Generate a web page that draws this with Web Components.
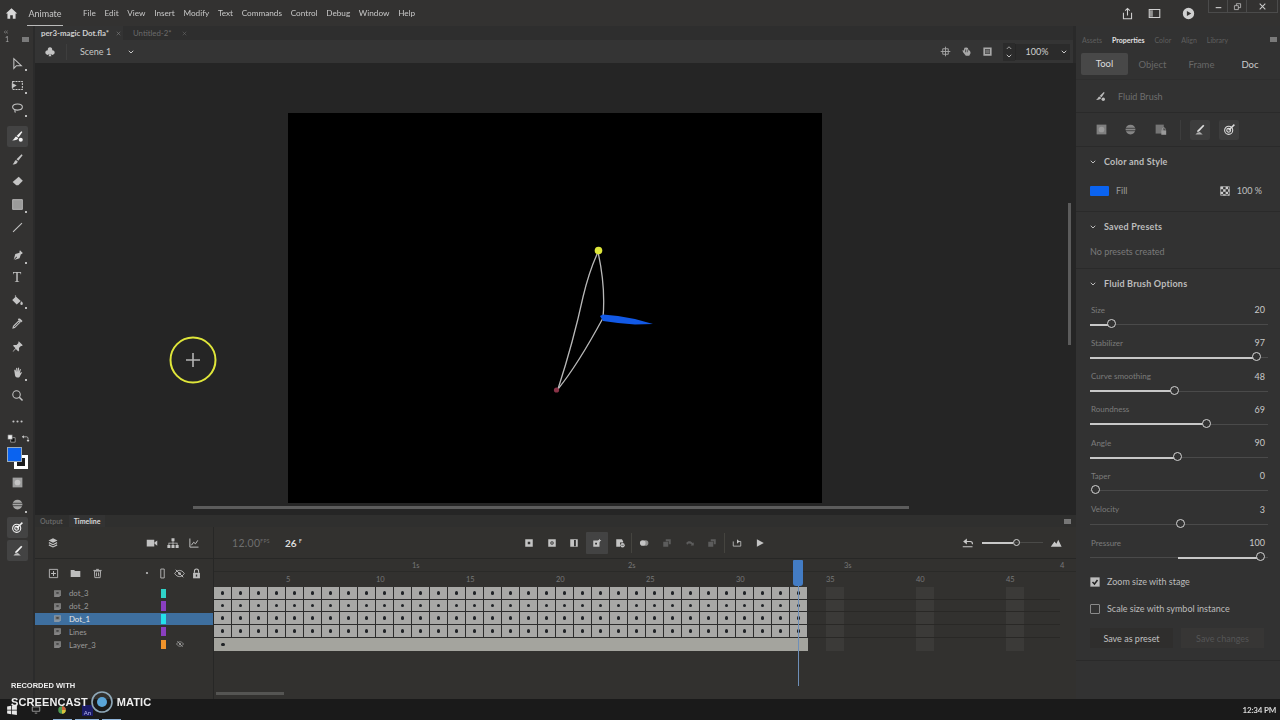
<!DOCTYPE html>
<html lang="en">
<head>
<meta charset="utf-8">
<title>Animate</title>
<style>
html, body { margin: 0; height: 100%; background: #252525; overflow: hidden; }
body { font-family: Lato, "Open Sans", "Liberation Sans", sans-serif; }
</style>
</head>
<body>
<an-app></an-app>
<script>
/* icon strokes and fills, all on a 16 x 16 box */
const S = 'fill="none" stroke="currentColor" stroke-width="1.3"'
const ICONS = {
  home: `<path fill="currentColor" d="M8 1.500 15 8h-2v6.500H9.600V10H6.400v4.500H3V8H1z"/>`,
  share: `<path ${S} d="M3 7v7.500h10V7M8 10.500V2M5.200 4.600 8 1.800l2.800 2.800"/>`,
  panel: `<path ${S} d="M1.500 3h13v10h-13z"/><path fill="currentColor" opacity=".6" d="M2 4h4v8H2z"/>`,
  playc: `<path fill="currentColor" fill-rule="evenodd" d="M8 1a7 7 0 1 1 0 14A7 7 0 0 1 8 1zM6 4.800v6.400L11.400 8z"/>`,
  min: `<path fill="currentColor" d="M3 9h10v2H3z"/>`,
  restore: `<path ${S} d="M2.500 6.500h7v7h-7zM6 6.500V3h7.500v7H9.500"/>`,
  close: `<path fill="none" stroke="currentColor" stroke-width="1.800" d="m3 3 10 10M13 3 3 13"/>`,
  x: `<path fill="none" stroke="currentColor" stroke-width="1.200" d="m4 4 8 8M12 4l-8 8"/>`,
  club: `<path fill="currentColor" d="M8 1.500a3 3 0 0 1 2.700 4.300 3 3 0 1 1-1.900 4.600c.1 1.300.5 2.300 1.200 3.100H6c.7-.8 1.100-1.800 1.200-3.100a3 3 0 1 1-1.900-4.600A3 3 0 0 1 8 1.500z"/>`,
  chev: `<path fill="none" stroke="currentColor" stroke-width="2" d="m3.500 5.500 4.500 4.500 4.500-4.500"/>`,
  chevup: `<path fill="none" stroke="currentColor" stroke-width="1.600" d="m3.500 10 4.500-4.500 4.500 4.500"/>`,
  center: `<path ${S} d="M4 4h8v8H4zM8 1v14M1 8h14"/>`,
  clip: `<path fill="currentColor" d="M5 2.500 8 2l2 1 1 3 2 1 1 3-2 4H7L3 9 2 6l2 .5z"/><path fill="#333" d="M6 5h1v4H6zM8.500 5h1v4h-1z"/>`,
  frame: `<path fill="currentColor" fill-rule="evenodd" d="M2 2h12v12H2zM4.500 4.500v7h7v-7z"/><path fill="currentColor" opacity=".5" d="M5 5h6v6H5z"/>`,
  arrow: `<path ${S} d="M3.500 2v12l3.200-3.300h6z"/>`,
  transform: `<path ${S} stroke-dasharray="2.500 1" d="M2 3h12v10H2z"/><path fill="currentColor" d="M1 4.500 7 8l-6 3.500z"/>`,
  lasso: `<path ${S} d="M8 2.500c3.500 0 6 1.800 6 3.800s-2.500 3.700-6 3.700-6-1.700-6-3.700 2.500-3.800 6-3.800zM5 9.500c-1 1.500 0 2.500.5 3.500"/>`,
  fluid: `<path fill="currentColor" d="M12.800 1.500 14 2.600 9.500 9 6.800 7.300zM6 8l3 1.800c-.5 2-2.500 3-7.500 3.200C4 11.500 4.200 9.500 6 8z"/><circle cx="12" cy="12" r="2.500" fill="currentColor"/>`,
  brush: `<path fill="currentColor" d="M13 1.500l1.300 1.200L9 9.500 6.800 7.700zM6 8.500l2.300 1.900C7.800 13 5 14.300 2 14c1.500-1 2-4 4-5.500z"/>`,
  eraser: `<path fill="currentColor" d="M9.500 2 14.500 7 9 12.500H6.500L2 8.500z"/>`,
  rect: `<path fill="currentColor" opacity=".72" d="M2 2h12v12H2z"/><path fill="none" stroke="currentColor" d="M2 2h12v12H2z"/>`,
  line: `<path ${S} d="m2.500 13.500 11-11"/>`,
  pen: `<path fill="currentColor" d="M11 1.500 14.500 5l-1.500 1.500-.7-.3-1.800 5.300-6.500 2 3.500-3.500-.7-.7-3.500 3.500 2-6.500 5.300-1.800-.3-.7z"/>`,
  bucket: `<path fill="currentColor" d="M6 3l6 5.500-5 4.500-5.500-5.500zM5.500 1.500l1 1-1 1-1-1z"/><path fill="currentColor" d="M13 9c1 1.300 1.500 2 1.500 3a1.500 1.500 0 0 1-3 0c0-1 .5-1.700 1.500-3z"/>`,
  dropper: `<path ${S} d="m9.500 5 1.500 1.500-6.500 6.500-2 .5.500-2z"/><path fill="currentColor" d="m11 1.800 3.200 3.200-1.500 1.500-.8-.2-3.200-3.200-.2-.8z"/>`,
  pin: `<path fill="currentColor" d="M9.500 1.500 14.500 6.500l-1.300 1-1-.2L9.800 9.700 10 13l-1 1-3-3-3.500 3.500L2 14l3.500-4-3-3 1-1 3.300.2 2.400-2.400-.2-1z"/>`,
  hand: `<path fill="currentColor" d="M4.600 4.500c.7-.3 1 .2 1.200.8L6.500 7.500 6.300 2.800c0-1 1.300-1 1.400 0L8 7l.6-4.600c.2-1 1.500-.8 1.400.2L9.600 7.200l1.300-3.200c.4-.8 1.500-.4 1.200.5L10.800 9c1-1 1.800-1.800 2.500-1.200.5.400 0 1-.5 1.500L10.500 13.500c-.5.500-1 .7-2 .7-2 0-3-.7-3.500-2.500L4 5.500c0-.5.200-.8.600-1z"/>`,
  zoom: `<circle cx="6.800" cy="6.800" r="4.600" ${S}/><path fill="none" stroke="currentColor" stroke-width="1.800" d="m10.200 10.200 4 4"/>`,
  dots: `<circle cx="3" cy="8" r="1.300" fill="currentColor"/><circle cx="8" cy="8" r="1.300" fill="currentColor"/><circle cx="13" cy="8" r="1.300" fill="currentColor"/>`,
  swap: `<path ${S} d="M3.500 5H10c1.500 0 2.500 1 2.500 2.500V13"/><path fill="currentColor" d="M5 2v6L1.500 5zM10 10.500h5L12.500 14z"/>`,
  defaults: `<path fill="#111" stroke="#ddd" d="M6.500 6.500h8v8h-8z"/><path fill="#eee" stroke="#555" d="M1.500 1.500h8v8h-8z"/>`,
  objdraw: `<path fill="currentColor" opacity=".75" d="M2 2h12v12H2z"/><circle cx="8" cy="8" r="3.500" fill="currentColor"/>`,
  globe: `<circle cx="8" cy="8" r="6" fill="currentColor" opacity=".8"/><path fill="none" stroke="#333" d="M2 6.500h12M2 9.500h12"/>`,
  lockfill: `<path fill="currentColor" opacity=".65" d="M2 2h10v11H2z"/><path fill="currentColor" d="M9 9h6v5.500H9z"/><path fill="none" stroke="currentColor" d="M10.300 9V7.500a1.700 1.700 0 0 1 3.400 0V9"/>`,
  pencil: `<path fill="currentColor" d="M12.500 2 14 3.500 7.500 10.500 5 11.500l.8-2.700z"/><path fill="currentColor" opacity=".7" d="M3 14c2-2 4-3 5.500-3L12 14z"/>`,
  target: `<circle cx="7" cy="9" r="5" ${S}/><circle cx="7" cy="9" r="2.400" ${S}/><path fill="none" stroke="currentColor" stroke-width="1.800" d="M7 9 14 2"/>`,
  checker: `<path fill="currentColor" d="M1 1h4v4H1zM9 1h4v4H9zM5 5h4v4H5zM13 5h2v4h-2zM1 9h4v4H1zM9 9h4v4H9zM5 13h4v2H5zM13 13h2v2h-2z"/><path fill="none" stroke="currentColor" d="M1 1h14v14H1z"/>`,
  layers: `<path fill="currentColor" d="m8 1.500 6 3-6 3-6-3z"/><path fill="none" stroke="currentColor" stroke-width="1.500" d="m2.500 7.500 5.500 2.800 5.500-2.800M2.500 10.500 8 13.300l5.500-2.800"/>`,
  camera: `<path fill="currentColor" d="M1 3.500h10v9H1zM11.500 7l3.500-2.500v7L11.500 9z"/>`,
  tree: `<path fill="currentColor" d="M6 1.500h4v4H8.500V7.500H14v3h1.500v4h-4v-4H13V8.500H8.500v2H10v4H6v-4h1.500v-2H3v2h1.500v4h-4v-4H2v-3h5.500V5.500H6z"/>`,
  graph: `<path ${S} d="M2.500 2v11.500H14"/><path ${S} d="m4.500 11 3-4 2.500 2 3-4.500"/>`,
  addlayer: `<path ${S} d="M2 2h12v12H2z"/><path fill="currentColor" d="M7.300 4.500h1.400v2.800h2.800v1.400H8.700v2.800H7.300V8.700H4.500V7.300h2.800z"/>`,
  folder: `<path fill="currentColor" d="M1 3h5l1.500 1.500H15V13H1z"/>`,
  trash: `<path ${S} d="M3.500 4.500h9l-.6 9.500H4.100zM2 3.500h12M6 2h4M6.500 6.500v5.500M9.500 6.500v5.500"/>`,
  dot: `<circle cx="8" cy="8" r="2.200" fill="currentColor"/>`,
  outline: `<path ${S} d="M5.500 1.500h5v13h-5z"/>`,
  eyeoff: `<path ${S} d="M1 8c2-3 4.300-4.500 7-4.500S13 5 15 8c-2 3-4.300 4.500-7 4.500S3 11 1 8z"/><circle cx="8" cy="8" r="2" fill="currentColor"/><path fill="none" stroke="currentColor" stroke-width="1.400" d="m2.500 2.500 11 11"/>`,
  lock: `<path fill="currentColor" d="M3 7h10v8H3z"/><path fill="none" stroke="currentColor" stroke-width="1.600" d="M5 7V4.500a3 3 0 0 1 6 0V7"/><path fill="#333" d="M7 9.500h2v3H7z"/>`,
  page: `<path fill="currentColor" d="M2 2h12v9l-3 3H2z" opacity=".7"/><path fill="#333" d="M4.500 4.500h7v5h-7z"/><path fill="none" stroke="currentColor" d="M5 5h6v4H5z"/>`,
  key1: `<path fill="currentColor" d="M2 2h12v12H2z"/><path fill="#333" d="M6 6h4v4H6z"/>`,
  key2: `<path fill="currentColor" d="M2 2h12v12H2z"/><circle cx="8" cy="8" r="2.800" fill="#333"/><circle cx="8" cy="8" r="1.300" fill="currentColor"/>`,
  key3: `<path fill="currentColor" d="M2 2h12v12H2z"/><path fill="#333" d="M8 3h3v10H8z"/>`,
  key4: `<path fill="currentColor" d="M2 4h10v10H2z"/><path fill="#333" d="M5 7.500h3v3H5z"/><path fill="currentColor" d="M12 1l1 2 2 1-2 1-1 2-1-2-2-1 2-1z"/>`,
  key5: `<path fill="currentColor" d="M2 2h9l2 3v2H8v7H2z"/><circle cx="12" cy="11.500" r="3.500" fill="currentColor"/><path fill="#333" d="M10 11h4v1h-4z"/>`,
  onion: `<circle cx="6" cy="8" r="4.500" fill="currentColor"/><circle cx="10.500" cy="8" r="4.500" fill="currentColor" opacity=".65"/>`,
  ghost: `<path fill="currentColor" d="M2 6h8v8H2zM6 2h8v8h-3V5H6z"/>`,
  wave: `<path fill="currentColor" d="M2 8c2-4 8-4 10 0l2-1v5h-5l1.500-1.500C9 8 5 8 3.500 11z"/>`,
  loop: `<path ${S} d="M2 5.500V13h12V5.500H8"/><path fill="currentColor" d="M8 2v7L4 5.500z" transform="matrix(-1 0 0 1 16 0)"/>`,
  play: `<path fill="currentColor" d="M3 2 14 8 3 14z"/>`,
  undo: `<path fill="none" stroke="currentColor" stroke-width="1.500" d="M4 6h7c2.500 0 3 2 3 3.500M1 13h13"/><path fill="currentColor" d="M6.500 2v8L1.500 6z"/>`,
  peaks: `<path fill="currentColor" d="M1 13 6 6l2.500 3 2.500-5.500L15.500 13z"/>`,
  win: `<path fill="currentColor" d="M1.500 3.200 7 2.400V7.500H1.500zM8 2.300 14.500 1.400V7.500H8zM1.500 8.500H7v5.100l-5.500-.8zM8 8.500h6.500v6.100L8 13.700z"/>`,
  gear: `<path ${S} d="M2 3h12v7H2zM6 13h4"/>`,
  cpu: `<circle cx="8" cy="8" r="6" fill="#4f9a50"/><path fill="#d0613a" d="M8 8 14 8A6 6 0 0 0 8 2z"/><path fill="#d9c23c" d="M8 8V14A6 6 0 0 0 14 8z"/>`
}

// tiny helper, every element is a shadow root with its own style
function define(tag, css, render) {
  customElements.define(tag, class extends HTMLElement {
    connectedCallback() {
      if (this.shadowRoot) return
      this.attachShadow({ mode: 'open' })
      this.shadowRoot.innerHTML = `<style>${css}</style>${render(this)}`
    }
  })
}

define('an-icon', `
  :host { display: inline-flex; width: var(--s, 12px); height: var(--s, 12px); flex: none; }
  svg { width: 100%; height: 100%; display: block; }
`, (el) => `<svg viewBox="0 0 16 16" aria-hidden="true">${ICONS[el.getAttribute('name')] || ''}</svg>`)

define('an-titlebar', `
  :host { display: flex; align-items: center; height: 26px; background: #333231; color: #c8c8c8; font-size: 8.200px; box-sizing: border-box; position: relative; }
  .home { margin-left: 5px; --s: 13px; color: #d8d8d8; }
  .app { margin-left: 9px; height: 25px; width: 36px; display: flex; align-items: center; justify-content: center; font-size: 9px; border-bottom: 1px solid #bbb; box-sizing: border-box; margin-right: 20px; padding-top: 1px; }
  nav { display: flex; gap: 8.700px; }
  .end { margin-left: auto; display: flex; align-items: center; color: #d0d0d0; margin-top: 1px; padding-right: 85px; gap: 14px; }
  .end an-icon { --s: 13px; }
  .win { display: flex; position: absolute; right: 2px; top: 0; height: 12px; border: 1px solid #4b4b4b; border-top: 0; color: #ccc; }
  .win span { display: flex; align-items: center; justify-content: center; width: 18px; border-right: 1px solid #4b4b4b; }
  .win span:last-child { width: 30px; border: 0; }
  .win an-icon { --s: 9px; }
`, () => `
  <an-icon class="home" name="home"></an-icon>
  <div class="app">Animate</div>
  <nav><span>File</span><span>Edit</span><span>View</span><span>Insert</span><span>Modify</span><span>Text</span><span>Commands</span><span>Control</span><span>Debug</span><span>Window</span><span>Help</span></nav>
  <div class="end">
    <an-icon name="share"></an-icon><an-icon name="panel"></an-icon><an-icon name="playc" style="margin-left:7px"></an-icon>
  </div>
  <div class="win"><span><an-icon name="min"></an-icon></span><span><an-icon name="restore"></an-icon></span><span><an-icon name="close"></an-icon></span></div>
`)

define('an-tool', `
  :host { display: flex; align-items: center; justify-content: center; height: 22.700px; color: #c4c4c4; position: relative; }
  :host([sep]) { margin-top: 5.500px; }
  .b { width: 21px; height: 21px; display: flex; align-items: center; justify-content: center; border-radius: 2px; }
  :host([active]) .b { background: #434343; color: #f2f2f2; }
  an-icon { --s: 13px; }
  i { position: absolute; right: 6px; bottom: 3px; width: 2px; height: 2px; background: #bbb; }
`, (el) => `<div class="b"><an-icon name="${el.getAttribute('name')}"></an-icon></div>${el.hasAttribute('more') ? '<i></i>' : ''}`)

define('an-swatches', `
  :host { display: block; height: 40px; position: relative; margin-top: -2px; color: #d4d4d4; }
  .top { display: flex; gap: 5px; padding: 3px 0 0 6px; --s: 9px; }
  .fill, .stroke { position: absolute; }
  .stroke { left: 13px; top: 24px; width: 8px; height: 8px; border: 3px solid #fff; background: #1c1c1c; }
  .fill { left: 6px; top: 16px; width: 13px; height: 13px; background: #0a63f0; border: .500px solid #9ab; }
`, () => `
  <div class="top"><an-icon name="defaults"></an-icon><an-icon name="swap"></an-icon></div>
  <div class="stroke"></div><div class="fill"></div>
`)

define('an-tool-t', `
  :host { display: flex; align-items: center; justify-content: center; height: 22.700px; color: #c8c8c8; font: 14px "Liberation Serif", serif; }
`, () => 'T')

define('an-tools', `
  :host { display: flex; flex-direction: column; width: 33px; background: #333231; box-shadow: 2px 0 0 #2b2b2b; box-sizing: border-box; padding-left: 1px; height: 100%; color: #bbb; position: relative; z-index: 1; }
  .head { height: 25.700px; font-size: 7px; position: relative; }
  .head b { position: absolute; left: 3px; top: 1px; font-weight: 400; font-size: 7px; color: #aaa; }
  .head u { position: absolute; left: 4px; top: 9px; text-decoration: none; color: #aaa; }
  .head i { position: absolute; right: 4px; top: 11px; width: 7px; height: 5px; background: #7a7a7a; }
`, () => `
  <div class="head"><b>‹‹</b><u>1</u><i></i></div>
  <an-tool name="arrow" more></an-tool>
  <an-tool name="transform" more></an-tool>
  <an-tool name="lasso" more></an-tool>
  <an-tool name="fluid" sep active></an-tool>
  <an-tool name="brush"></an-tool>
  <an-tool name="eraser"></an-tool>
  <an-tool name="rect" more></an-tool>
  <an-tool name="line"></an-tool>
  <an-tool name="pen" sep more></an-tool>
  <an-tool-t>T</an-tool-t>
  <an-tool name="bucket" more></an-tool>
  <an-tool name="dropper"></an-tool>
  <an-tool name="pin"></an-tool>
  <an-tool name="hand" more style="margin-top:3.500px"></an-tool>
  <an-tool name="zoom"></an-tool>
  <an-tool name="dots" style="margin-top:3.500px"></an-tool>
  <an-swatches></an-swatches>
  <an-tool name="objdraw"></an-tool>
  <an-tool name="globe" more></an-tool>
  <an-tool name="target" active></an-tool>
  <an-tool name="pencil" active></an-tool>
`)

define('an-doctabs', `
  :host { display: flex; align-items: center; height: 14px; background: #2e2e2e; font-size: 7.800px; color: #6b6b6b; white-space: nowrap; }
  .tab { display: flex; align-items: center; height: 100%; padding: 0 0 0 8px; gap: 6px; }
  .on { background: #333; color: #cfcfcf; font-weight: 700; width: 90px; box-sizing: border-box; margin-right: 10px; }
  .on an-icon { color: #888; }
  an-icon { --s: 7px; }
`, () => `
  <div class="tab on">per3-magic Dot.fla*<an-icon name="x"></an-icon></div>
  <div class="tab" style="padding:0">Untitled-2*<an-icon name="x" style="margin-left:3px"></an-icon></div>
`)

define('an-scenebar', `
  :host { display: flex; align-items: center; height: 23px; background: #343434; color: #c8c8c8; font-size: 9px; }
  .club { --s: 12px; margin: 0 0 0 11px; color: #c4c4c4; }
  .sep { width: 1px; height: 16px; background: #3e3e3e; margin: 0 13px 0 10px; }
  .chev { --s: 8px; margin-left: 16px; }
  .end { margin-left: auto; display: flex; align-items: center; padding-right: 6px; }
  .end > an-icon { --s: 11px; color: #a8a8a8; margin-right: 10px; }
  .step { display: flex; flex-direction: column; --s: 8px; color: #bbb; background: #2b2b2b; height: 18px; justify-content: center; padding: 0 2px; }
  .box { display: flex; align-items: center; justify-content: center; width: 42px; height: 16px; background: #2b2b2b; border-left: 1px solid #262626; color: #d0d0d0; }
  .drop { --s: 8px; background: #2b2b2b; height: 16px; display: flex; align-items: center; padding: 0 2px; }
`, () => `
  <an-icon class="club" name="club"></an-icon><div class="sep"></div>
  <span>Scene 1</span><an-icon class="chev" name="chev"></an-icon>
  <div class="end">
    <an-icon name="center"></an-icon><an-icon name="clip"></an-icon><an-icon name="frame"></an-icon>
    <div class="step"><an-icon name="chevup"></an-icon><an-icon name="chev"></an-icon></div>
    <div class="box">100%</div><div class="drop"><an-icon name="chev"></an-icon></div>
  </div>
`)

define('an-stage', `
  :host { display: flex; flex: 1; justify-content: center; padding: 50px 2px 0 0; box-sizing: border-box; background: #252525; position: relative; min-height: 0; }
  svg.art { width: 534px; height: 390px; background: #000; display: block; flex: none; margin-left: 2px; }
  .hs { position: absolute; left: 160px; top: 443px; width: 716px; height: 3px; background: #5c5c5c; }
  .vs { position: absolute; right: 5px; top: 140px; width: 3px; height: 142px; background: #5c5c5c; }
  .cursor { position: absolute; left: 136px; top: 273px; width: 48px; height: 48px; }
`, () => `
  <svg class="art" viewBox="288 113 534 390">
    <path d="M598 252C592 265 587 280 583 297 578 320 570 352 558 389" fill="none" stroke="#b8b8b8" stroke-width="1.300"/>
    <path d="M598 252C602 270 605 295 603 318 590 342 572 372 558 389" fill="none" stroke="#b8b8b8" stroke-width="1.300"/>
    <path d="M600 316 603 314.500 618 316 635 319 653 324 635 324.500 618 323 603 321z" fill="#1259e6"/>
    <circle cx="598.500" cy="250.500" r="3.800" fill="#dde63a"/>
    <circle cx="556.500" cy="390" r="2.600" fill="#8a3347"/>
  </svg>
  <div class="hs"></div><div class="vs"></div>
  <svg class="cursor" viewBox="0 0 48 48">
    <circle cx="24" cy="24" r="22.500" fill="none" stroke="#dfe63a" stroke-width="2"/>
    <path d="M24 17v14M17 24h14" stroke="#b4b4b4" stroke-width="1.600"/>
  </svg>
`)

define('an-layer', `
  :host { display: flex; align-items: center; height: 12.800px; font-size: 7.800px; color: #9a9a9a; box-sizing: border-box; padding-left: 18px; position: relative; }
  :host([sel]) { background: #3e6f9f; color: #e8e8e8; }
  an-icon { --s: 9px; color: #a8a8a8; margin-right: 7px; }
  .mark { position: absolute; left: 126px; top: 1.500px; width: 5px; height: 9.500px; }
  .hide { position: absolute; left: 141px; --s: 8px; top: 2px; }
`, (el) => `
  <an-icon name="page"></an-icon><span>${el.getAttribute('label')}</span>
  <div class="mark" style="background:${el.getAttribute('color')}"></div>
  ${el.hasAttribute('hidden-mark') ? '<an-icon class="hide" name="eyeoff"></an-icon>' : ''}
`)

define('an-frames', `
  :host { display: grid; grid-template-columns: repeat(47, 18px); grid-template-rows: repeat(4, 12.700px) 13px; position: relative; }
  .c { background: #a8a8a6; border-right: 1px solid #2c2c2c; border-bottom: 1px solid #2c2c2c; box-sizing: border-box; display: flex; align-items: center; justify-content: center; }
  .c::after { content: ""; width: 3.500px; height: 3.500px; border-radius: 50%; background: #1f2226; }
  .last { grid-column: span 33; background: #a4a49e; display: flex; align-items: center; padding-left: 7px; border: 0; justify-content: flex-start; }
  .e { border-bottom: 1px solid #292826; }
  .g { background: #3b3a38; }
`, () => {
  let html = ''
  for (let r = 0; r < 4; r++) {
    for (let f = 1; f <= 47; f++) {
      if (f <= 33) html += '<div class="c"></div>'
      else html += `<div class="e${f % 5 === 0 ? ' g' : ''}"></div>`
    }
  }
  html += '<div class="c last"></div>'
  for (let f = 34; f <= 47; f++) html += `<div class="${f % 5 === 0 ? 'g' : ''}"></div>`
  return html
})

define('an-timeline', `
  :host { display: grid; grid-template-columns: 181px minmax(0, 1fr); grid-template-rows: 12px 32px 28px 64px 1fr; height: 184px; background: #32312f; color: #bbb; position: relative; box-sizing: border-box; font-size: 7.500px; }
  .tabs { grid-column: 1 / -1; display: flex; align-items: center; padding-left: 7px; background: #2f2f2e; color: #666; font-weight: 700; font-size: 7px; }
  .tabs b { color: #d8d8d8; font-weight: 700; background: #333; height: 100%; display: flex; align-items: center; padding: 0 5px; margin-left: 6px; }
  .menu { margin-left: auto; width: 7px; height: 5px; background: #777; margin-right: 5px; }
  .lhead, .ctrl { display: flex; align-items: center; border-bottom: 1px solid #272726; }
  .lhead { padding-left: 14px; color: #c2c2c2; border-right: 1px solid #272726; }
  .lhead an-icon { --s: 12px; }
  .lhead .r { margin-left: auto; display: flex; gap: 9px; padding-right: 13px; }
  .ctrl { padding-left: 18px; min-width: 0; }
  .fps { color: #6e6e6e; font-size: 10.500px; letter-spacing: .3px; width: 53px; }
  .fps sup, .cur sup { font-size: 5px; vertical-align: 4px; }
  .cur { font-size: 10px; font-weight: 700; color: #dcdcdc; width: 232.500px; }
  .keys { display: flex; align-items: center; color: #c4c4c4; }
  .keys span { display: flex; width: 22.700px; height: 22px; align-items: center; justify-content: center; --s: 10px; border-radius: 1px; }
  .keys .on { background: #434343; }
  .keys .off { color: #5c5c5c; }
  .vr { width: 1px; height: 20px; background: #45443f; margin: 0 .500px; }
  .zoomer { margin-left: auto; display: flex; align-items: center; padding-right: 14px; color: #c8c8c8; --s: 12px; }
  .mini { width: 61px; height: 1px; background: #4a4a48; margin: 0 7px 0 8px; position: relative; }
  .mini::before { content: ""; position: absolute; left: 0; top: -.500px; width: 31px; height: 2px; background: #c8c8c8; }
  .mini::after { content: ""; position: absolute; left: 31px; top: -3.500px; width: 5px; height: 5px; border: 1.300px solid #d4d4d4; border-radius: 50%; }
  .lcol { padding-left: 15px; display: flex; align-items: center; color: #bdbdbd; --s: 11px; gap: 11px; border-right: 1px solid #272726; }
  .lcol .r { margin-left: auto; display: flex; align-items: center; gap: 6px; padding-right: 11px; }
  .ruler { display: grid; grid-template-rows: 13px 15px; color: #777; min-width: 0; overflow: hidden; }
  .secs { display: flex; border-bottom: 1px solid #2a2a28; padding-left: 198px; align-items: center; }
  .secs span { width: 216px; flex: none; }
  .secs span:last-child, .nums span:last-child { width: auto; }
  .nums { display: flex; padding-left: 72px; align-items: center; }
  .nums span { width: 90px; flex: none; }
  .layers { border-right: 1px solid #272726; padding-left: 2px; }
  .foot { grid-column: 2; position: relative; }
  .thumb { position: absolute; left: 2px; top: 41px; width: 68px; height: 3px; background: #555553; }
  .head { position: absolute; left: 760px; top: 45px; width: 10px; height: 26px; background: #437cc4; border-radius: 1px 1px 3px 3px; }
  .line { position: absolute; left: 765px; top: 71px; width: 1px; height: 100px; background: #6e8fb8; }
  .clip { overflow: hidden; }
`, () => `
  <div class="tabs"><span>Output</span><b>Timeline</b><span class="menu"></span></div>
  <div class="lhead"><an-icon name="layers"></an-icon><div class="r"><an-icon name="camera"></an-icon><an-icon name="tree"></an-icon><an-icon name="graph"></an-icon></div></div>
  <div class="ctrl">
    <span class="fps">12.00<sup>FPS</sup></span>
    <span class="cur">26 <sup>F</sup></span>
    <div class="keys">
      <span><an-icon name="key1"></an-icon></span><span><an-icon name="key2"></an-icon></span><span><an-icon name="key3"></an-icon></span>
      <span class="on"><an-icon name="key4"></an-icon></span><span><an-icon name="key5"></an-icon></span><div class="vr"></div>
      <span><an-icon name="onion"></an-icon></span><span class="off"><an-icon name="ghost"></an-icon></span><span class="off"><an-icon name="wave"></an-icon></span><span class="off"><an-icon name="ghost"></an-icon></span><div class="vr"></div>
      <span><an-icon name="loop"></an-icon></span><span><an-icon name="play"></an-icon></span>
    </div>
    <div class="zoomer"><an-icon name="undo"></an-icon><div class="mini"></div><an-icon name="peaks"></an-icon></div>
  </div>
  <div class="lcol"><an-icon name="addlayer"></an-icon><an-icon name="folder"></an-icon><an-icon name="trash"></an-icon>
    <div class="r"><an-icon name="dot" style="--s:8px"></an-icon><an-icon name="outline"></an-icon><an-icon name="eyeoff"></an-icon><an-icon name="lock"></an-icon></div></div>
  <div class="ruler">
    <div class="secs"><span>1s</span><span>2s</span><span>3s</span><span>4</span></div>
    <div class="nums"><span>5</span><span>10</span><span>15</span><span>20</span><span>25</span><span>30</span><span>35</span><span>40</span><span>45</span></div>
  </div>
  <div class="layers">
    <an-layer label="dot_3" color="#2fd3c8"></an-layer>
    <an-layer label="dot_2" color="#8a3fc0"></an-layer>
    <an-layer label="Dot_1" color="#24e0ea" sel></an-layer>
    <an-layer label="Lines" color="#8a3fc0"></an-layer>
    <an-layer label="Layer_3" color="#f0932b" hidden-mark></an-layer>
  </div>
  <div class="clip"><an-frames></an-frames></div>
  <div style="border-right:1px solid #272726"></div>
  <div class="foot"><div class="thumb"></div></div>
  <div class="head"></div><div class="line"></div>
`)

define('an-slider', `
  :host { display: block; height: 33.300px; box-sizing: border-box; padding: 0 15px 0 15px; font-size: 8px; color: #7c7c7c; }
  .top { display: flex; justify-content: space-between; align-items: center; height: 15px; }
  .top b { font-weight: 400; color: #c8c8c8; font-size: 9px; }
  .track { position: relative; height: 1px; background: #4a4a4a; margin: 7px -3px 0 -1px; }
  .fill { position: absolute; top: -.500px; height: 2px; background: #c8c8c8; }
  .knob { position: absolute; top: -5px; width: 7px; height: 7px; margin-left: -5px; border: 1.500px solid #d4d4d4; border-radius: 50%; background: #323232; }
`, (el) => {
  const at = +el.getAttribute('at')
  const from = +(el.getAttribute('from') || 0)
  const fill = el.hasAttribute('nofill') ? '' : `<div class="fill" style="left:${from}px;width:${at - from}px"></div>`
  return `<div class="top"><span>${el.getAttribute('label')}</span><b>${el.getAttribute('value')}</b></div>
    <div class="track">${fill}<div class="knob" style="left:${at}px"></div></div>`
})

define('an-section', `
  :host { display: block; border-top: 1px solid #2a2a2a; }
  .h { display: flex; align-items: center; height: 29px; padding-left: 13px; gap: 7px; font-size: 9px; font-weight: 700; color: #bdbdbd; letter-spacing: .2px; --s: 8px; }
`, (el) => `<div class="h"><an-icon name="chev"></an-icon>${el.getAttribute('title')}</div><slot></slot>`)

define('an-check', `
  :host { display: flex; align-items: center; gap: 7px; height: 27px; padding-left: 14px; font-size: 9px; color: #bcbcbc; }
  .box { width: 8px; height: 8px; border: 1px solid #8a8a8a; border-radius: 1px; display: flex; align-items: center; justify-content: center; }
  :host([on]) .box { background: #bdbdbd; }
  svg { width: 8px; height: 8px; }
`, (el) => `<div class="box">${el.hasAttribute('on') ? '<svg viewBox="0 0 8 8"><path d="m1.500 4 2 2 3-4" fill="none" stroke="#222" stroke-width="1.500"/></svg>' : ''}</div>${el.getAttribute('label')}`)

define('an-props', `
  :host { display: flex; flex-direction: column; height: 100%; background: #323232; border-left: 3px solid #2a2a2a; box-sizing: border-box; margin-left: -3px; width: 207px; color: #bbb; font-size: 9px; }
  .tabs { display: flex; align-items: center; height: 27px; padding: 0 0 0 6px; box-sizing: border-box; gap: 10px; font-size: 7px; color: #5f5f5f; }
  .tabs b { color: #e0e0e0; font-weight: 700; }
  .tabs i { margin-left: auto; margin-right: 3px; width: 7px; height: 5px; background: #7a7a7a; }
  .seg { display: grid; grid-template-columns: 47px 49px 49px 48px; margin: 0 0 0 5px; height: 22px; align-items: center; text-align: center; font-size: 9.500px; color: #686868; }
  .seg .on { background: #484848; color: #ddd; height: 22px; line-height: 22px; border-radius: 2px; }
  .seg .doc { color: #ccc; }
  .tool { display: flex; align-items: center; gap: 12px; height: 32px; padding: 0 0 0 19px; margin-top: 4px; border-top: 1px solid #2e2e2e; color: #6f6f6f; --s: 11px; }
  .tool an-icon { color: #bbb; }
  .opts { display: flex; align-items: center; height: 33px; border-top: 1px solid #2a2a2a; padding-left: 15px; --s: 13px; color: #9a9a9a; }
  .opts span { display: flex; width: 20px; height: 20px; align-items: center; justify-content: center; margin-right: 9.500px; border-radius: 2px; }
  .opts .hi { background: #3d3d3d; color: #ddd; }
  .opts .d { width: 1px; background: #3d3d3d; height: 20px; margin-right: 9px; }
  .fill { display: flex; align-items: center; height: 21px; padding: 0 18px 0 14px; margin: 4px 0 10px; color: #9a9a9a; }
  .sw { width: 19px; height: 10px; background: #0a63f0; border-radius: 1px; margin-right: 7px; }
  .fill an-icon { --s: 10px; margin-left: auto; color: #ccc; margin-right: 7px; }
  .fill b { font-weight: 400; color: #c0c0c0; }
  .none { padding-left: 14px; color: #7a7a7a; height: 27px; line-height: 21px; box-sizing: border-box; }
  .list { margin-top: 4px; }
  .btns { display: flex; gap: 8px; padding: 6px 14px 0 14px; }
  .btns div { width: 83px; height: 20px; display: flex; align-items: center; justify-content: center; background: #2f2e2d; color: #c0c0c0; }
  .btns .off { background: #373635; color: #555; }
  .rule { margin-top: 12px; border-top: 1px solid #2a2a2a; }
`, () => `
  <div class="tabs"><span>Assets</span><b>Properties</b><span>Color</span><span>Align</span><span>Library</span><i></i></div>
  <div class="seg"><div class="on">Tool</div><div>Object</div><div>Frame</div><div class="doc">Doc</div></div>
  <div class="tool"><an-icon name="fluid"></an-icon>Fluid Brush</div>
  <div class="opts">
    <span><an-icon name="objdraw"></an-icon></span><span><an-icon name="globe"></an-icon></span><span><an-icon name="lockfill"></an-icon></span>
    <div class="d"></div>
    <span class="hi"><an-icon name="pencil"></an-icon></span><span class="hi"><an-icon name="target"></an-icon></span>
  </div>
  <an-section title="Color and Style">
    <div class="fill"><div class="sw"></div>Fill<an-icon name="checker"></an-icon><b>100 %</b></div>
  </an-section>
  <an-section title="Saved Presets"><div class="none">No presets created</div></an-section>
  <an-section title="Fluid Brush Options">
    <div class="list">
      <an-slider label="Size" value="20" at="22"></an-slider>
      <an-slider label="Stabilizer" value="97" at="167"></an-slider>
      <an-slider label="Curve smoothing" value="48" at="85"></an-slider>
      <an-slider label="Roundness" value="69" at="117"></an-slider>
      <an-slider label="Angle" value="90" at="88"></an-slider>
      <an-slider label="Taper" value="0" at="6" nofill></an-slider>
      <an-slider label="Velocity" value="3" at="91" nofill></an-slider>
      <an-slider label="Pressure" value="100" at="171" from="88"></an-slider>
    </div>
    <an-check label="Zoom size with stage" on></an-check>
    <an-check label="Scale size with symbol instance"></an-check>
    <div class="btns"><div>Save as preset</div><div class="off">Save changes</div></div>
    <div class="rule"></div>
  </an-section>
`)

define('an-taskbar', `
  :host { display: flex; align-items: center; height: 21px; background: #1a1a1a; color: #d8d8d8; font-size: 8px; position: relative; }
  .win { margin-left: 6px; --s: 12px; color: #e8e8e8; }
  .ico { --s: 10px; margin-left: 13px; color: #aaa; }
  .an { margin: 1px 0 0 15px; width: 11px; height: 11px; background: #1a1a66; color: #b9b9f0; font-size: 6px; display: flex; align-items: flex-end; justify-content: center; line-height: 7px; }
  .time { margin-left: auto; padding-right: 4px; font-weight: 700; letter-spacing: -.2px; }
  .u { position: absolute; bottom: 0; height: 1.500px; background: #8fb4da; }
`, () => `
  <an-icon class="win" name="win"></an-icon>
  <an-icon class="ico" name="gear"></an-icon>
  <an-icon class="ico" name="cpu" style="margin-left:16px"></an-icon>
  <div class="an">An</div>
  <span class="time">12:34 PM</span>
  <div class="u" style="left:53px;width:19px"></div>
  <div class="u" style="left:75px;width:24px"></div>
  <div class="u" style="left:102px;width:19px"></div>
`)

define('an-watermark', `
  :host { position: absolute; left: 11px; top: 680px; z-index: 2; color: #eee; font-family: "Liberation Sans", sans-serif; display: block; pointer-events: none; }
  .a { font-size: 7.500px; font-weight: 700; height: 12px; line-height: 12px; }
  .b { display: flex; align-items: center; font-size: 11px; font-weight: 700; letter-spacing: .1px; height: 20px; }
  .b span { line-height: 12px; }
  svg { width: 24px; height: 24px; flex: none; margin: 0 3px 0 2px; }
`, () => `
  <div class="a">RECORDED WITH</div>
  <div class="b"><span>SCREENCAST</span><svg viewBox="0 0 24 24"><circle cx="12" cy="12" r="10" fill="none" stroke="#8fa8b8" stroke-width="1.600"/><circle cx="12" cy="12" r="5" fill="#5aa5d8"/></svg><span>MATIC</span></div>
`)

define('an-app', `
  :host { display: grid; grid-template-columns: 33px minmax(0, 1fr) 204px; grid-template-rows: 26px minmax(0, 1fr) 21px; width: 1280px; height: 720px; position: relative; filter: blur(.35px); }
  an-titlebar, an-taskbar { grid-column: 1 / -1; }
  .center { display: flex; flex-direction: column; min-width: 0; min-height: 0; }
`, () => `
  <an-titlebar></an-titlebar>
  <an-tools></an-tools>
  <div class="center">
    <an-doctabs></an-doctabs>
    <an-scenebar></an-scenebar>
    <an-stage></an-stage>
    <an-timeline></an-timeline>
  </div>
  <an-props></an-props>
  <an-taskbar></an-taskbar>
  <an-watermark></an-watermark>
`)
</script>
</body>
</html>
